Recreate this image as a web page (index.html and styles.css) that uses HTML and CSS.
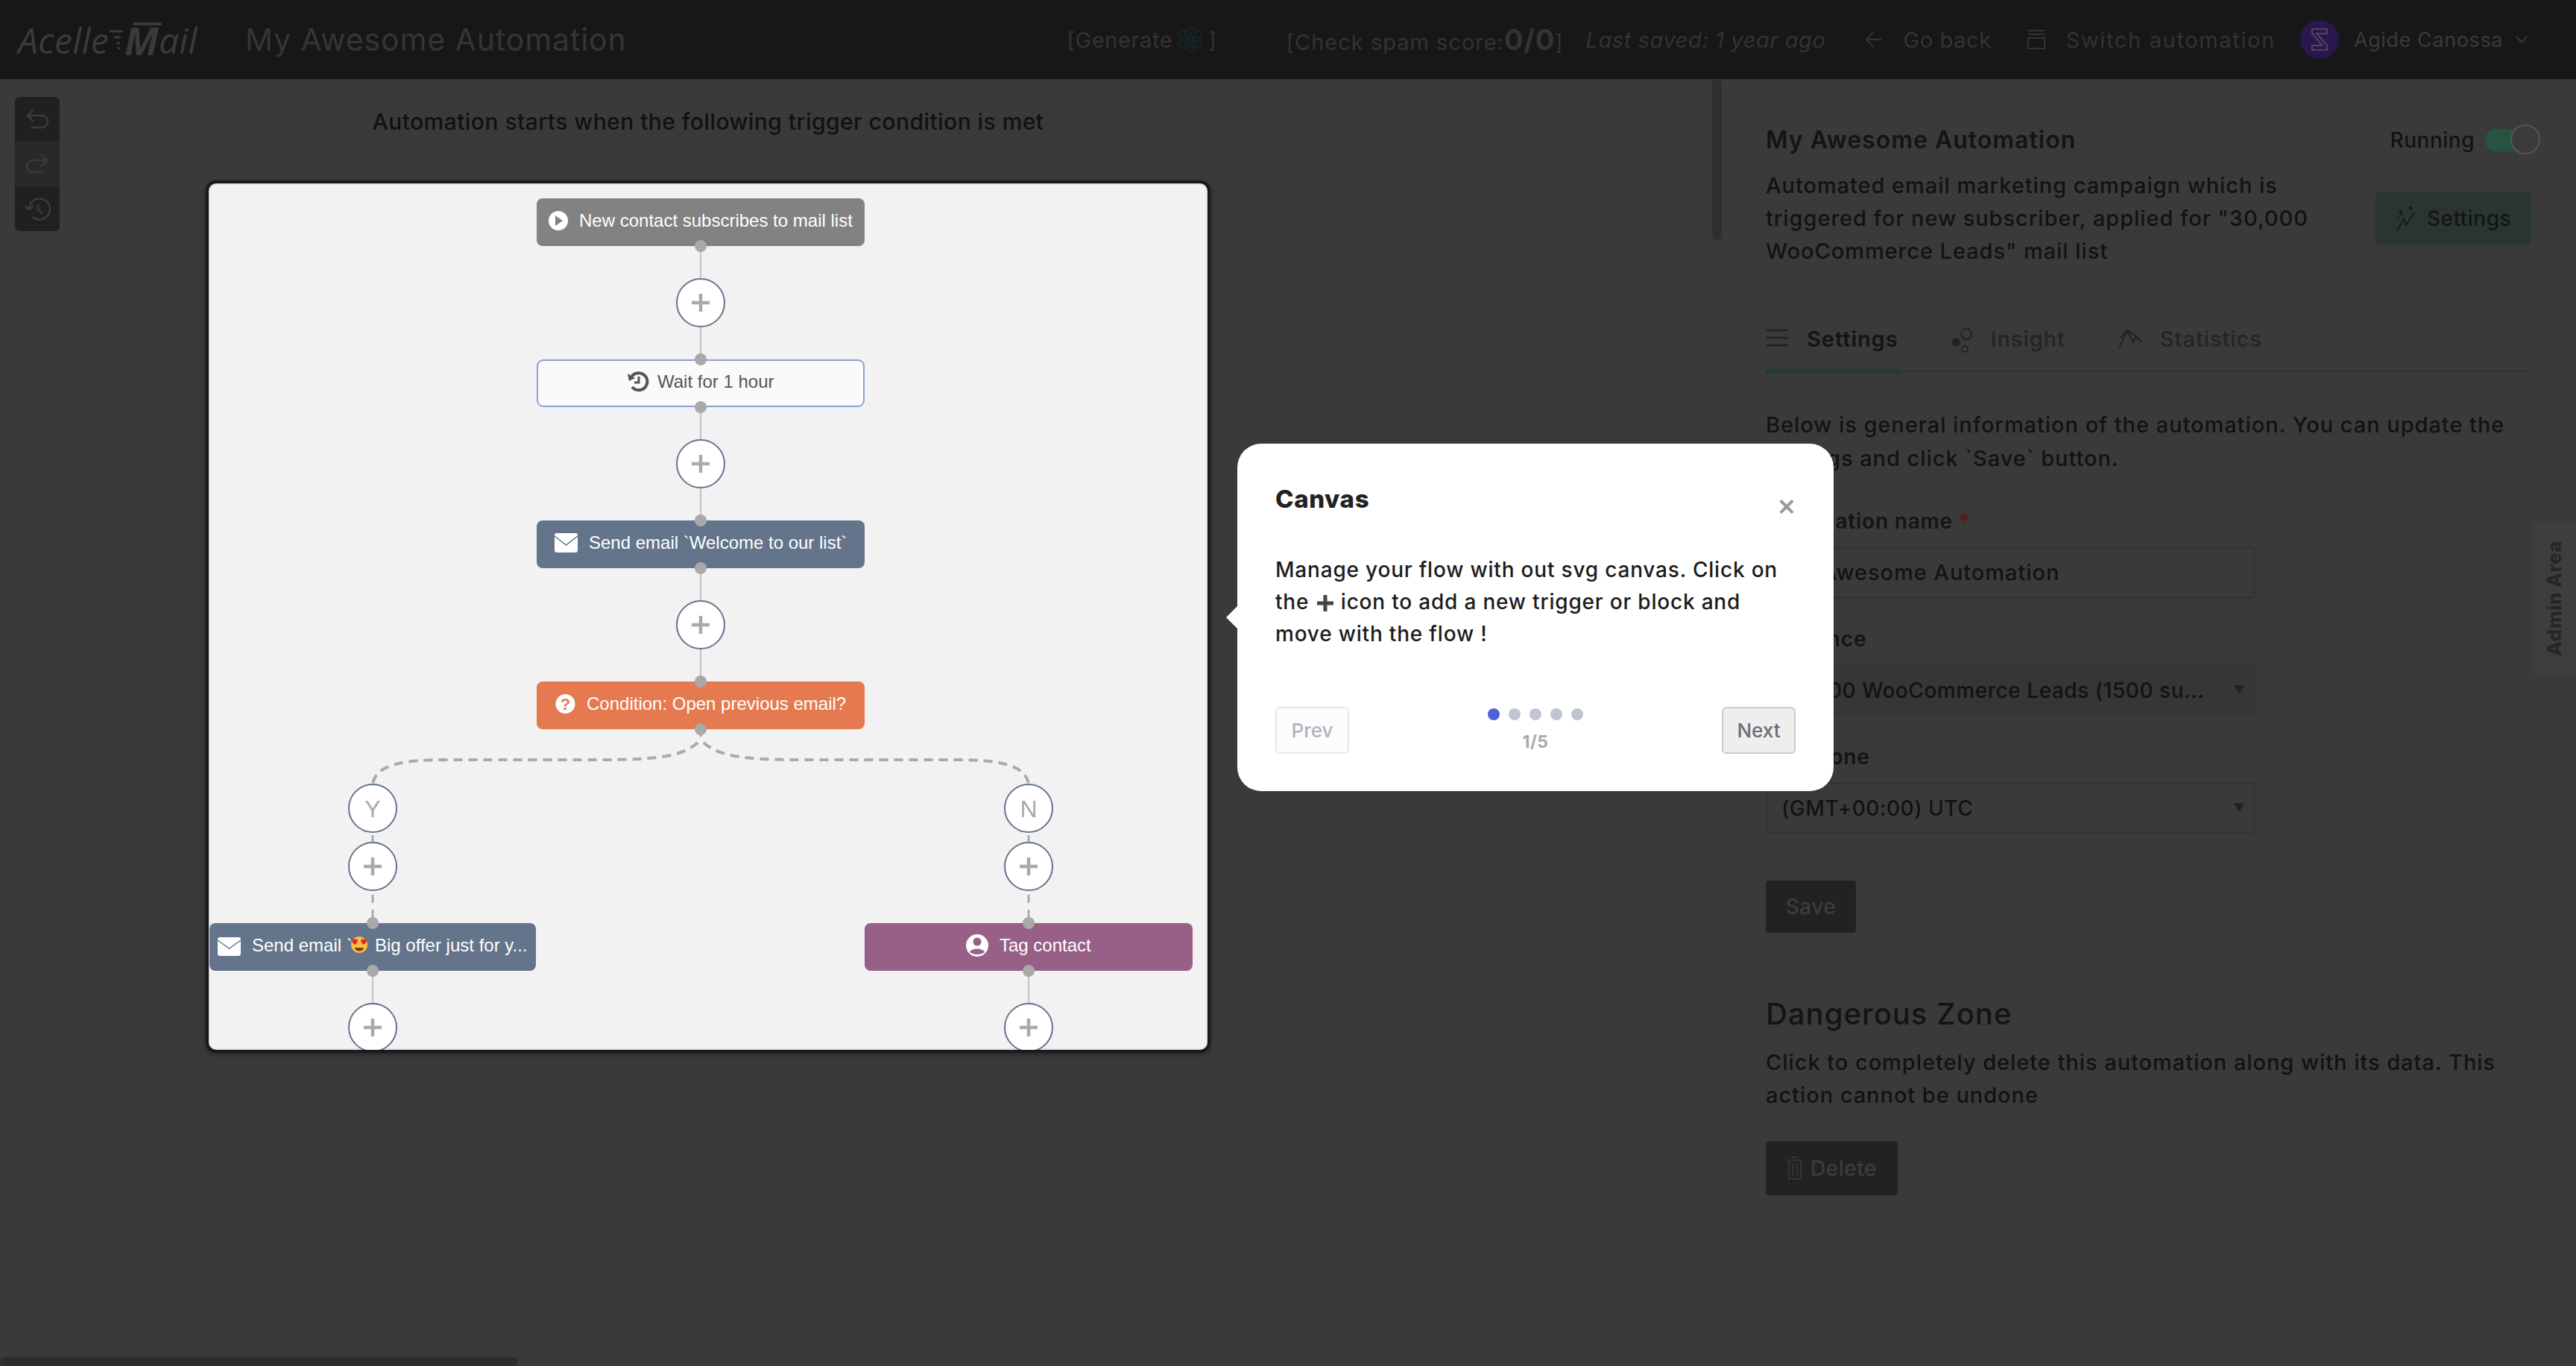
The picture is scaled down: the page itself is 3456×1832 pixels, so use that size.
FILE: index.html
```html
<!DOCTYPE html>
<html lang="en">
<head>
  <meta charset="UTF-8">
  <meta name="viewport" content="width=device-width, initial-scale=1.0">
  <title>My Awesome Automation</title>
  <link rel="stylesheet" href="styles.css">
</head>
<body>

  <header class="topbar">
    <div class="logo">
      <span>Acelle</span>
      <svg class="logo-lines" width="20" height="30" viewBox="0 0 20 30"><path d="M0 4h18M6 12h9M9 20h5M11 27h3" stroke="#3a3a3a" stroke-width="3" fill="none"/></svg>
      <span class="logo-m">M</span><span>ail</span>
    </div>
    <div class="topbar-title">My Awesome Automation</div>

    <div class="topbar-right">
      <div class="generate">[Generate
        <svg class="openai" width="36" height="36" viewBox="-18 -18 36 36">
          <g fill="none" stroke="#14252a" stroke-width="2">
            <ellipse cx="0" cy="-7" rx="7" ry="10"/>
            <ellipse cx="0" cy="-7" rx="7" ry="10" transform="rotate(60)"/>
            <ellipse cx="0" cy="-7" rx="7" ry="10" transform="rotate(120)"/>
            <ellipse cx="0" cy="-7" rx="7" ry="10" transform="rotate(180)"/>
            <ellipse cx="0" cy="-7" rx="7" ry="10" transform="rotate(240)"/>
            <ellipse cx="0" cy="-7" rx="7" ry="10" transform="rotate(300)"/>
          </g>
        </svg>]</div>
      <div class="spam">[Check spam score:<b>0/0</b>]</div>
      <div class="saved">Last saved: 1 year ago</div>
      <div class="topbar-link back">
        <svg width="24" height="30" viewBox="0 0 24 30"><path d="M22 15H3M11 5L2 15l9 10" fill="none" stroke="#333" stroke-width="2"/></svg>
        <span>Go back</span>
      </div>
      <div class="topbar-link switch">
        <svg width="26" height="28" viewBox="0 0 26 28"><path d="M2 2h22M2 7h22M2 12h22v14H2z" fill="none" stroke="#333" stroke-width="2"/></svg>
        <span>Switch automation</span>
      </div>
      <div class="user">
        <svg class="avatar" width="52" height="52" viewBox="0 0 52 52">
          <circle cx="26" cy="26" r="26" fill="#2a1650"/>
          <path d="M16 12h20v6H22l14 16v6H16v-6h14L16 18z" fill="none" stroke="#4a4a52" stroke-width="2"/>
        </svg>
        <span class="user-name">Agide Canossa</span>
        <svg width="18" height="12" viewBox="0 0 18 12"><path d="M2 2l7 8 7-8" fill="none" stroke="#3a3a3a" stroke-width="2"/></svg>
      </div>
    </div>
  </header>

  <div class="main">
    <div class="canvas-area">
      <div class="toolbox">
        <div class="tool">
          <svg width="30" height="30" viewBox="0 0 30 30"><path d="M10 2L2 10l8 8M2 10h19a7 7 0 0 1 0 16H7" fill="none" stroke="#3c3c3c" stroke-width="2.4"/></svg>
        </div>
        <div class="tool tool-off">
          <svg width="30" height="30" viewBox="0 0 30 30"><path d="M20 2l8 8-8 8M28 10H9a7 7 0 0 0 0 16h14" fill="none" stroke="#3a3a3a" stroke-width="2.4"/></svg>
        </div>
        <div class="tool">
          <svg width="36" height="34" viewBox="0 0 36 34"><path d="M7 17a14 14 0 1 1 5 11M1 13l6 5 6-5M19 11v7l6 6" fill="none" stroke="#3c3c3c" stroke-width="2.4"/></svg>
        </div>
      </div>

      <div class="canvas-title">Automation starts when the following trigger condition is met</div>

      <div class="flow-box">
        <svg class="flow" width="1340" height="1162" viewBox="280 246 1340 1162">
          <g stroke="#c2c2c2" stroke-width="2">
            <path d="M940 330V374M940 438V482M940 546V590M940 654V698M940 762V806M940 870V914"/>
            <path d="M500 1302V1346M1380 1302V1346"/>
          </g>
          <g stroke="#aaa" stroke-width="3">
            <path d="M940 978V988M500 1120V1130M1380 1120V1130"/>
            <path d="M500 1200V1211M500 1220V1238M1380 1200V1211M1380 1220V1238"/>
          </g>
          <g fill="none" stroke="#aaa" stroke-width="4" stroke-dasharray="12 8">
            <path d="M936 996C915 1015 880 1019 800 1019L600 1019C540 1019 505 1025 500 1051"/>
            <path d="M944 996C965 1015 1000 1019 1080 1019L1280 1019C1340 1019 1375 1025 1380 1051"/>
          </g>

          <rect x="720" y="266" width="440" height="64" rx="8" fill="#828282"/>
          <rect x="721" y="483" width="438" height="62" rx="8" fill="#fafafa" stroke="#8d9fd8" stroke-width="2"/>
          <rect x="720" y="698" width="440" height="64" rx="8" fill="#64748b"/>
          <rect x="720" y="914" width="440" height="64" rx="8" fill="#e57a50"/>
          <rect x="281" y="1238" width="438" height="64" rx="8" fill="#64748b"/>
          <rect x="1160" y="1238" width="440" height="64" rx="8" fill="#985f87"/>

          <g fill="#a9a9a9">
            <circle cx="940" cy="330" r="8"/><circle cx="940" cy="482" r="8"/><circle cx="940" cy="546" r="8"/>
            <circle cx="940" cy="698" r="8"/><circle cx="940" cy="762" r="8"/><circle cx="940" cy="914" r="8"/>
            <circle cx="940" cy="978" r="8"/><circle cx="500" cy="1238" r="8"/><circle cx="500" cy="1302" r="8"/>
            <circle cx="1380" cy="1238" r="8"/><circle cx="1380" cy="1302" r="8"/>
          </g>

          <g fill="#fff" stroke="#64748b" stroke-width="2">
            <circle cx="940" cy="406" r="32"/><circle cx="940" cy="622" r="32"/><circle cx="940" cy="838" r="32"/>
            <circle cx="500" cy="1084" r="32"/><circle cx="500" cy="1162" r="32"/><circle cx="500" cy="1378" r="32"/>
            <circle cx="1380" cy="1084" r="32"/><circle cx="1380" cy="1162" r="32"/><circle cx="1380" cy="1378" r="32"/>
          </g>
          <g stroke="#aaa" stroke-width="4.5">
            <path d="M928 406h24M940 394v24M928 622h24M940 610v24M928 838h24M940 826v24"/>
            <path d="M488 1162h24M500 1150v24M488 1378h24M500 1366v24"/>
            <path d="M1368 1162h24M1380 1150v24M1368 1378h24M1380 1366v24"/>
          </g>
          <text class="flow-yn" x="500" y="1096">Y</text>
          <text class="flow-yn" x="1380" y="1096">N</text>

          <circle cx="749" cy="296" r="13" fill="#fff"/>
          <path d="M745 289l10 7-10 7z" fill="#828282"/>
          <text class="flow-text" x="777" y="304">New contact subscribes to mail list</text>

          <path d="M846 508a11.5 11.5 0 1 1 2 11" fill="none" stroke="#555" stroke-width="4"/>
          <path d="M842 501l2 10 8-4z" fill="#555"/>
          <path d="M857 505v8h-6" fill="none" stroke="#555" stroke-width="3"/>
          <text class="flow-text flow-dark" x="882" y="520">Wait for 1 hour</text>

          <rect x="744" y="715" width="31" height="26" rx="3" fill="#fff"/>
          <path d="M744 719l15.5 12 15.5-12" fill="none" stroke="#64748b" stroke-width="1.5"/>
          <text class="flow-text" x="790" y="736">Send email `Welcome to our list`</text>

          <circle cx="758.5" cy="944" r="13" fill="#fff"/>
          <text class="flow-q" x="758.5" y="952">?</text>
          <text class="flow-text" x="787" y="952">Condition: Open previous email?</text>

          <rect x="292" y="1257" width="31" height="25" rx="3" fill="#fff"/>
          <path d="M292 1261l15.5 11 15.5-11" fill="none" stroke="#64748b" stroke-width="1.5"/>
          <text class="flow-text" x="338" y="1276">Send email `</text>
          <circle cx="482" cy="1267" r="11" fill="#fbbf3c"/>
          <path d="M476 1260c-4-2-6 3 0 7 6-4 4-9 0-7zM488 1260c-4-2-6 3 0 7 6-4 4-9 0-7z" fill="#e0263a"/>
          <path d="M476 1271h12c-1 6-11 6-12 0z" fill="#7a3a10"/>
          <text class="flow-text" x="503" y="1276">Big offer just for y...</text>

          <circle cx="1311" cy="1268" r="15" fill="#fff"/>
          <circle cx="1311" cy="1263" r="5.5" fill="#985f87"/>
          <path d="M1301 1277c2-6 18-6 20 0-5 4-15 4-20 0z" fill="#985f87"/>
          <text class="flow-text" x="1341" y="1276">Tag contact</text>
        </svg>
      </div>
    </div>

    <aside class="panel">
      <div class="panel-head">
        <div class="panel-info">
          <h2 class="panel-title">My Awesome Automation</h2>
          <p class="panel-desc">Automated email marketing campaign which is triggered for new subscriber, applied for "30,000 WooCommerce Leads" mail list</p>
        </div>
        <div class="panel-side">
          <div class="running">
            <span>Running</span>
            <span class="toggle"><span class="toggle-knob"></span></span>
          </div>
          <div class="btn-settings">
            <svg width="30" height="36" viewBox="0 0 30 36"><path d="M2 34L11 18l3 9L25 10M7 7v7M4 10h6M20 1v6M17 4h6M1 17h4" fill="none" stroke="#141414" stroke-width="1.5"/></svg>
            <span>Settings</span>
          </div>
        </div>
      </div>

      <nav class="tabs">
        <div class="tab tab-active">
          <svg width="31" height="28" viewBox="0 0 31 28"><path d="M1 4h29M1 14h29M1 24h29" stroke="#222" stroke-width="2.4"/></svg>
          <span>Settings</span>
        </div>
        <div class="tab">
          <svg width="29" height="36" viewBox="0 0 29 36"><circle cx="20" cy="9" r="7" fill="none" stroke="#222" stroke-width="2"/><circle cx="6" cy="20" r="5.5" fill="#222"/><circle cx="18" cy="29" r="4" fill="none" stroke="#222" stroke-width="2"/></svg>
          <span>Insight</span>
        </div>
        <div class="tab">
          <svg width="32" height="30" viewBox="0 0 32 30"><path d="M1 28L12 4l8 16 4-8 7 8M3 14l9-10 12 8" fill="none" stroke="#222" stroke-width="2"/></svg>
          <span>Statistics</span>
        </div>
      </nav>

      <p class="panel-text tab-intro">Below is general information of the automation. You can update the settings and click `Save` button.</p>

      <div class="field">
        <label class="field-label">Automation name <em>*</em></label>
        <div class="field-box field-name">My Awesome Automation</div>
      </div>
      <div class="field">
        <label class="field-label">Audience</label>
        <div class="field-box field-select field-fill">30,000 WooCommerce Leads (1500 su...</div>
      </div>
      <div class="field">
        <label class="field-label">Timezone</label>
        <div class="field-box field-select">(GMT+00:00) UTC</div>
      </div>

      <div class="btn-dark btn-save">Save</div>

      <h3 class="danger-title">Dangerous Zone</h3>
      <p class="panel-text danger-text">Click to completely delete this automation along with its data. This action cannot be undone</p>
      <div class="btn-dark btn-delete">
        <svg width="22" height="32" viewBox="0 0 22 32"><path d="M1 5h20M7 1h8M3 5v25h16V5M8 9v17M14 9v17" fill="none" stroke="#343434" stroke-width="2"/></svg>
        <span>Delete</span>
      </div>
    </aside>
  </div>

  <div class="scroll-v"></div>
  <div class="scroll-h"></div>
  <div class="admin-tab"><span>Admin Area</span></div>

  <div class="tour">
    <div class="tour-head">
      <div class="tour-title">Canvas</div>
      <div class="tour-close">×</div>
    </div>
    <p class="tour-text">Manage your flow with out svg canvas. Click on the <svg class="tour-plus" width="22" height="22" viewBox="0 0 22 22"><path d="M0 11h22M11 0v22" stroke="#444" stroke-width="5"/></svg> icon to add a new trigger or block and move with the flow !</p>
    <div class="tour-foot">
      <div class="tour-btn tour-prev">Prev</div>
      <div class="tour-progress">
        <div class="tour-dots">
          <i class="tour-dot tour-dot-on"></i><i class="tour-dot"></i><i class="tour-dot"></i><i class="tour-dot"></i><i class="tour-dot"></i>
        </div>
        <div class="tour-count">1/5</div>
      </div>
      <div class="tour-btn tour-next">Next</div>
    </div>
  </div>

</body>
</html>
```

FILE: styles.css
```css
* {
  box-sizing: border-box;
}

body {
  margin: 0;
  width: 3456px;
  height: 1832px;
  overflow: hidden;
  position: relative;
  background: #3a3a3a;
  color: #121212;
  font-family: Inter, "Noto Sans", sans-serif;
  font-size: 29px;
  font-weight: 450;
  letter-spacing: 0.95px;
}

p, h2, h3 {
  margin: 0;
}

/* top bar */
.topbar {
  height: 106px;
  background: #171717;
  display: flex;
  align-items: center;
  padding: 0 64px 0 24px;
  color: #333;
  font-weight: 400;
}

.logo {
  width: 240px;
  display: flex;
  align-items: center;
  font-family: "Open Sans", sans-serif;
  font-style: italic;
  font-size: 48px;
  letter-spacing: 0.2px;
  color: #3a3a3a;
}

.logo-lines {
  flex: none;
  margin-left: 1px;
}

.logo-m {
  position: relative;
  font-size: 52px;
  font-weight: 700;
}

.logo-m::before {
  content: "";
  position: absolute;
  left: 12px;
  right: -4px;
  top: 12px;
  height: 4px;
  background: #3a3a3a;
}

.topbar-title {
  margin-left: 65px;
  font-size: 41px;
  letter-spacing: 0.9px;
  color: #353535;
}

.topbar-right {
  margin-left: auto;
  display: flex;
  align-items: center;
  letter-spacing: 0.6px;
}

.generate {
  display: flex;
  align-items: center;
  gap: 6px;
  white-space: nowrap;
}

.spam {
  margin-left: 93px;
  letter-spacing: 1px;
  white-space: nowrap;
}

.spam b {
  font-size: 38px;
  font-weight: 700;
  letter-spacing: 0.6px;
}

.saved {
  margin-left: 30px;
  font-style: italic;
  white-space: nowrap;
}

.topbar-link {
  display: flex;
  align-items: center;
  margin-left: 53px;
  gap: 27px;
  white-space: nowrap;
}

.switch {
  margin-left: 47px;
  letter-spacing: 1.65px;
}

.user {
  display: flex;
  align-items: center;
  margin-left: 33px;
  color: #3a3a3a;
}

.user-name {
  margin: 0 16px 0 20px;
  font-size: 27px;
  white-space: nowrap;
}

/* left side */
.main {
  display: flex;
  height: 1726px;
}

.canvas-area {
  width: 2310px;
  position: relative;
  padding: 35px 0 0 276px;
}

.toolbox {
  position: absolute;
  left: 20px;
  top: 24px;
  width: 60px;
  border-radius: 6px;
  overflow: hidden;
  background: #202020;
}

.tool {
  height: 60px;
  display: flex;
  align-items: center;
  justify-content: center;
}

.tool-off {
  background: #292929;
}

.canvas-title {
  width: 1348px;
  line-height: 44px;
  font-size: 30px;
  letter-spacing: 0.45px;
  text-align: center;
  color: #111;
}

.flow-box {
  margin-top: 57px;
  width: 1348px;
  height: 1170px;
  border: 4px solid #1a1a1a;
  border-radius: 14px;
  background: #f2f2f2;
  overflow: hidden;
  box-shadow: inset 0 0 0 2px #e3e1f3, 0 2px 6px rgba(0, 0, 0, 0.4);
}

.flow {
  display: block;
}

.flow-text {
  font-family: "Liberation Sans", Arial, sans-serif;
  font-size: 24px;
  font-weight: 400;
  letter-spacing: 0;
  fill: #fff;
}

.flow-dark {
  fill: #555;
}

.flow-yn {
  font-family: "Liberation Sans", Arial, sans-serif;
  font-size: 32px;
  font-weight: 400;
  letter-spacing: 0;
  fill: #aaa;
  text-anchor: middle;
}

.flow-q {
  font-family: "Liberation Sans", Arial, sans-serif;
  font-size: 22px;
  font-weight: 700;
  letter-spacing: 0;
  fill: #e57a50;
  text-anchor: middle;
}

/* right panel */
.panel {
  flex: 1;
  padding: 60px 60px 0 59px;
  position: relative;
}

.panel-head {
  display: flex;
  justify-content: space-between;
}

.panel-info {
  width: 760px;
}

.panel-title {
  line-height: 44px;
  font-size: 32px;
  font-weight: 600;
  letter-spacing: 1px;
  color: #141414;
}

.panel-desc {
  margin-top: 17px;
  line-height: 44px;
}

.panel-side {
  display: flex;
  flex-direction: column;
  align-items: flex-end;
  font-size: 28px;
  letter-spacing: 0.5px;
}

.running {
  display: flex;
  align-items: center;
  height: 44px;
  gap: 14px;
  margin-right: -12px;
}

.toggle {
  width: 74px;
  height: 30px;
  border-radius: 15px;
  background: #275440;
  position: relative;
}

.toggle-knob {
  position: absolute;
  right: 0;
  top: -6px;
  width: 40px;
  height: 40px;
  border-radius: 50%;
  border: 2px solid #555;
  background: #3b3b3b;
}

.btn-settings {
  margin-top: 48px;
  width: 209px;
  height: 70px;
  border-radius: 4px;
  background: #2a3533;
  display: flex;
  align-items: center;
  justify-content: center;
  gap: 12px;
  color: #141414;
}

.tabs {
  margin-top: 74px;
  display: flex;
  gap: 71px;
  height: 66px;
  border-bottom: 2px solid #333;
}

.tab {
  position: relative;
  display: flex;
  align-items: flex-start;
  gap: 24px;
  height: 64px;
  line-height: 44px;
  color: #242424;
}

.tab svg {
  margin-top: 6px;
}

.tab-active span {
  font-weight: 600;
  color: #141414;
}

.tab-active::after {
  content: "";
  position: absolute;
  left: 0;
  right: 0;
  bottom: -4px;
  height: 6px;
  background: #1f3a38;
}

.panel-text {
  line-height: 45px;
}

.tab-intro {
  margin-top: 48px;
}

.field {
  width: 657px;
  margin-top: 34px;
}

.tab-intro + .field {
  margin-top: 42px;
}

.field-label {
  display: block;
  height: 40px;
  line-height: 40px;
  margin-bottom: 14px;
  font-weight: 600;
  font-size: 28px;
  letter-spacing: 0.8px;
  color: #141414;
}

.field-label em {
  font-style: normal;
  color: #5a1515;
}

.field-box {
  height: 70px;
  line-height: 64px;
  padding: 0 18px;
  border: 3px solid #333;
  border-radius: 6px;
  position: relative;
  white-space: nowrap;
}

.field-select {
  font-size: 28px;
  letter-spacing: 0.55px;
}

.field-fill {
  background: #363636;
  border-color: #363636;
}

.field-select::after {
  content: "";
  position: absolute;
  right: 12px;
  top: 25px;
  border: 7px solid transparent;
  border-top: 12px solid #222;
  border-bottom: 0;
}

.btn-dark {
  background: #222;
  color: #3c3c3c;
  border-radius: 4px;
  display: flex;
  align-items: center;
  justify-content: center;
  font-size: 28px;
  letter-spacing: 0.5px;
}

.btn-save {
  margin-top: 62px;
  width: 121px;
  height: 70px;
}

.danger-title {
  margin-top: 84px;
  line-height: 50px;
  font-size: 40px;
  font-weight: 450;
  letter-spacing: 1px;
  color: #141414;
}

.danger-text {
  margin-top: 18px;
  line-height: 44px;
}

.btn-delete {
  margin-top: 40px;
  width: 177px;
  height: 72px;
  gap: 10px;
}

/* scrollbars and side tab */
.scroll-v {
  position: absolute;
  left: 2297px;
  top: 106px;
  width: 13px;
  height: 216px;
  border-radius: 6px;
  background: #2f2f2f;
}

.scroll-h {
  position: absolute;
  left: 0;
  bottom: 0;
  width: 694px;
  height: 12px;
  border-radius: 6px;
  background: #2d2d2d;
}

.admin-tab {
  position: absolute;
  right: 0;
  top: 700px;
  width: 59px;
  height: 205px;
  background: #3e3e3e;
  border-radius: 4px 0 0 4px;
  display: flex;
  align-items: center;
  justify-content: center;
}

.admin-tab span {
  writing-mode: vertical-rl;
  transform: rotate(180deg);
  font-size: 26px;
  font-weight: 800;
  letter-spacing: 0.4px;
  color: #262626;
}

/* tour popover */
.tour {
  position: absolute;
  left: 1660px;
  top: 595px;
  width: 800px;
  height: 466px;
  padding: 50px 51px 0;
  background: #fff;
  border-radius: 32px;
  color: #1c1c1c;
  font-size: 28px;
  letter-spacing: 0.8px;
}

.tour::before {
  content: "";
  position: absolute;
  left: -10px;
  top: 221px;
  width: 24px;
  height: 24px;
  background: #fff;
  transform: rotate(45deg);
}

.tour-head {
  display: flex;
  justify-content: space-between;
}

.tour-title {
  line-height: 48px;
  font-size: 33px;
  font-weight: 800;
  letter-spacing: 0.6px;
  color: #222;
}

.tour-close {
  margin: 10px -2px 0 0;
  font-size: 40px;
  line-height: 44px;
  color: #999;
}

.tour-text {
  margin-top: 44px;
  height: 129px;
  line-height: 43px;
}

.tour-plus {
  vertical-align: -3px;
  margin: 0 2px;
}

.tour-foot {
  display: flex;
  justify-content: space-between;
  margin-top: 76px;
}

.tour-btn {
  width: 99px;
  height: 63px;
  line-height: 59px;
  text-align: center;
  font-size: 26px;
  letter-spacing: 0;
  border: 2px solid #e5e7eb;
  border-radius: 6px;
}

.tour-prev {
  background: #fcfcfc;
  color: #b0b3bd;
}

.tour-next {
  background: #eee;
  border-color: #ccc;
  color: #6b6d7a;
}

.tour-progress {
  display: flex;
  flex-direction: column;
  align-items: center;
  margin-top: 2px;
}

.tour-dots {
  display: flex;
  gap: 12px;
}

.tour-dot {
  width: 16px;
  height: 16px;
  border-radius: 50%;
  background: #c0c6cf;
}

.tour-dot-on {
  background: #5060d8;
}

.tour-count {
  margin-top: 14px;
  line-height: 30px;
  font-size: 23px;
  font-weight: 700;
  letter-spacing: 0.5px;
  color: #aaa;
}
```
